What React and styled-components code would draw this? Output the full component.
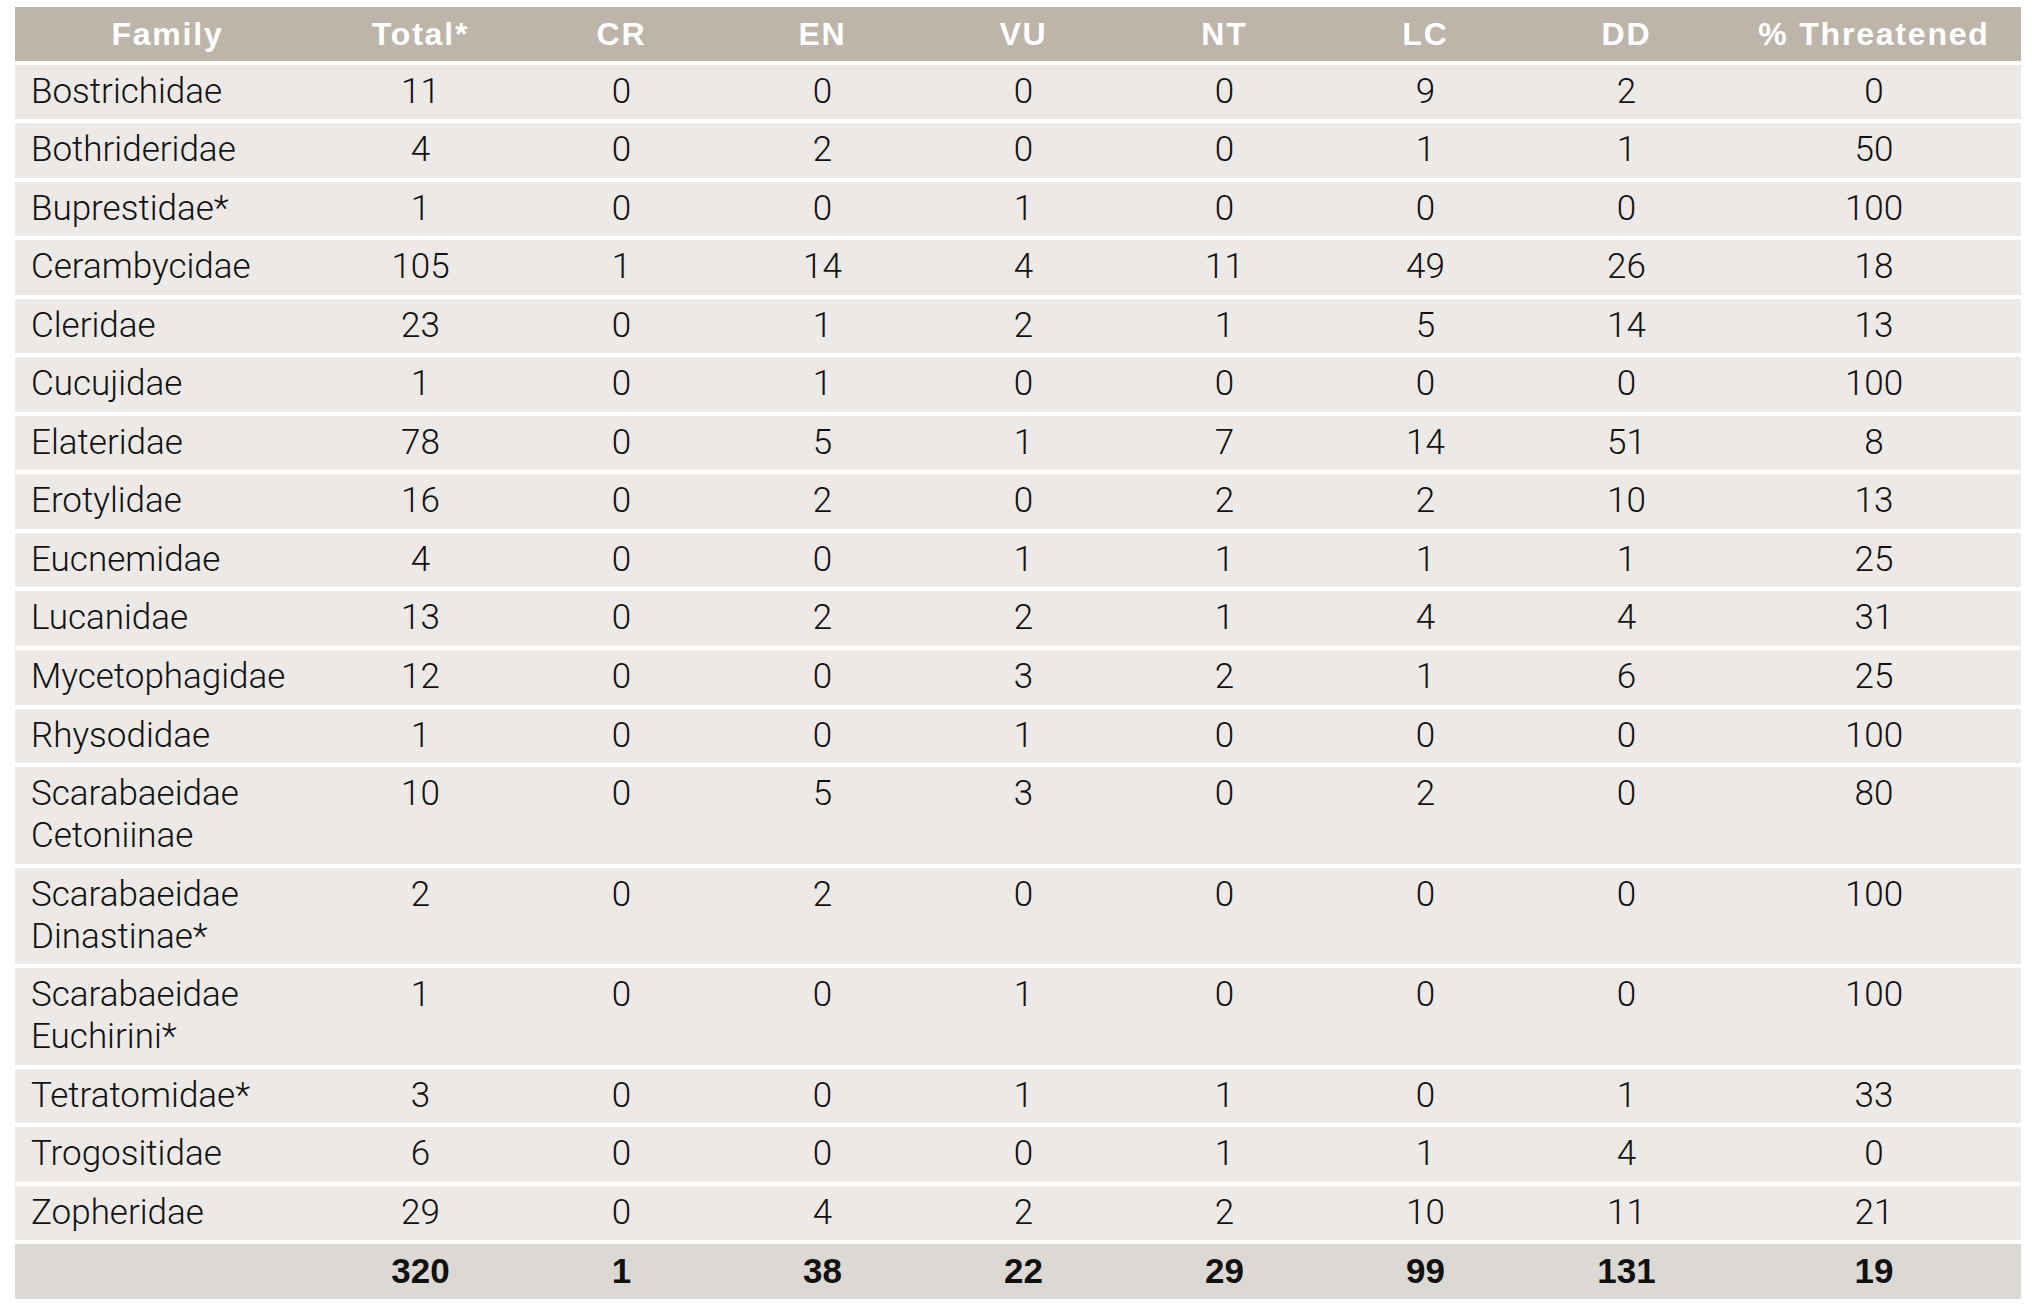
import React from "react";
import styled, { createGlobalStyle } from "styled-components";

const Global = createGlobalStyle`
  html, body { margin: 0; padding: 0; background: #ffffff; }
  body { font-family: "Liberation Sans", Arial, sans-serif; }
`;

const Page = styled.div`
  padding: 3px 0 0 15px;
`;

const Table = styled.table`
  width: 2006px;
  table-layout: fixed;
  border-collapse: separate;
  border-spacing: 0 4px;
  color: #111;
`;

const Col = styled.col`
  width: ${(p) => p.$w}px;
`;

const HeadCell = styled.th`
  height: 53.5px;
  padding: 0;
  background: #bdb5aa;
  color: #ffffff;
  font-family: "Liberation Sans", Arial, sans-serif;
  font-size: 32px;
  font-weight: 700;
  letter-spacing: 1.8px;
  text-align: center;
  vertical-align: middle;
  line-height: 1;
`;

const Cell = styled.td`
  padding: 6px 0 6.55px ${(p) => (p.$left ? "16px" : "0")};
  background: ${(p) => (p.$total ? "#dcd8d3" : "#ece9e6")};
  font-family: ${(p) =>
    p.$total ? '"Liberation Sans", Arial, sans-serif' : 'Roboto, "Liberation Sans", sans-serif'};
  font-size: 35px;
  font-weight: ${(p) => (p.$total ? 700 : 300)};
  line-height: 42px;
  text-align: ${(p) => (p.$left ? "left" : "center")};
  vertical-align: top;
`;

const NameLine = styled.span`
  display: block;
`;

const headers = ["Family", "Total*", "CR", "EN", "VU", "NT", "LC", "DD", "% Threatened"];
const widths = [305, 201, 201, 201, 201, 201, 201, 201, 294];

const rows = [
  [["Bostrichidae"], 11, 0, 0, 0, 0, 9, 2, 0],
  [["Bothrideridae"], 4, 0, 2, 0, 0, 1, 1, 50],
  [["Buprestidae*"], 1, 0, 0, 1, 0, 0, 0, 100],
  [["Cerambycidae"], 105, 1, 14, 4, 11, 49, 26, 18],
  [["Cleridae"], 23, 0, 1, 2, 1, 5, 14, 13],
  [["Cucujidae"], 1, 0, 1, 0, 0, 0, 0, 100],
  [["Elateridae"], 78, 0, 5, 1, 7, 14, 51, 8],
  [["Erotylidae"], 16, 0, 2, 0, 2, 2, 10, 13],
  [["Eucnemidae"], 4, 0, 0, 1, 1, 1, 1, 25],
  [["Lucanidae"], 13, 0, 2, 2, 1, 4, 4, 31],
  [["Mycetophagidae"], 12, 0, 0, 3, 2, 1, 6, 25],
  [["Rhysodidae"], 1, 0, 0, 1, 0, 0, 0, 100],
  [["Scarabaeidae", "Cetoniinae"], 10, 0, 5, 3, 0, 2, 0, 80],
  [["Scarabaeidae", "Dinastinae*"], 2, 0, 2, 0, 0, 0, 0, 100],
  [["Scarabaeidae", "Euchirini*"], 1, 0, 0, 1, 0, 0, 0, 100],
  [["Tetratomidae*"], 3, 0, 0, 1, 1, 0, 1, 33],
  [["Trogositidae"], 6, 0, 0, 0, 1, 1, 4, 0],
  [["Zopheridae"], 29, 0, 4, 2, 2, 10, 11, 21],
];

const totals = ["", 320, 1, 38, 22, 29, 99, 131, 19];

export default function App() {
  return (
    <Page>
      <Global />
      <Table>
        <colgroup>
          {widths.map((w, i) => (
            <Col key={i} $w={w} />
          ))}
        </colgroup>
        <thead>
          <tr>
            {headers.map((h) => (
              <HeadCell key={h}>{h}</HeadCell>
            ))}
          </tr>
        </thead>
        <tbody>
          {rows.map((r, i) => (
            <tr key={i}>
              <Cell $left>
                {r[0].map((line) => (
                  <NameLine key={line}>{line}</NameLine>
                ))}
              </Cell>
              {r.slice(1).map((v, j) => (
                <Cell key={j}>{v}</Cell>
              ))}
            </tr>
          ))}
          <tr>
            {totals.map((v, j) => (
              <Cell key={j} $total $left={j === 0}>
                {v}
              </Cell>
            ))}
          </tr>
        </tbody>
      </Table>
    </Page>
  );
}
